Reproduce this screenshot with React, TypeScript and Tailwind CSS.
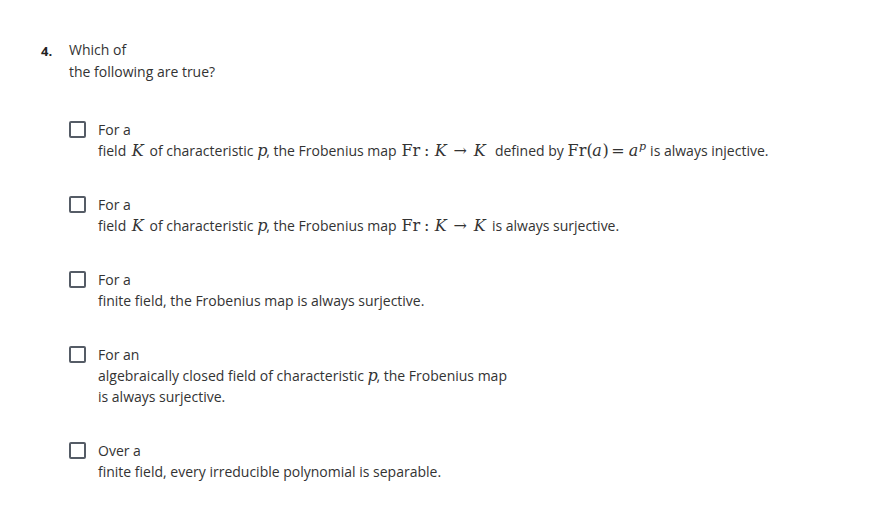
import React from "react";

const serif = '"DejaVu Serif", "Liberation Serif", serif';

const A = ({
  children,
  w,
  i = false,
  sup = false,
}: {
  children: React.ReactNode;
  w: string;
  i?: boolean;
  sup?: boolean;
}) => (
  <span
    className={`inline-block text-center leading-none ${w} ${i ? "italic" : ""} ${
      sup ? "text-[11px] align-[6px]" : "text-[16px]"
    }`}
    style={{ fontFamily: serif }}
  >
    {children}
  </span>
);

const FrMap = () => (
  <>
    <A w="w-[21px]">Fr</A>
    <A w="w-[11px]">:</A>
    <A w="w-[17px]" i>
      K
    </A>
    <A w="w-[22px]">→</A>
    <A w="w-[17px]" i>
      K
    </A>
  </>
);

const options: { first: string; rest: React.ReactNode }[] = [
  {
    first: "For a",
    rest: (
      <>
        field <A w="w-[16px]" i>K</A> of characteristic <A w="w-[9px]" i>p</A>, the Frobenius map{" "}
        <FrMap />
        <span className="inline-block w-[3px]" /> defined by <A w="w-[19px]">Fr</A>
        <A w="w-[5px]">(</A>
        <A w="w-[11px]" i>
          a
        </A>
        <A w="w-[5px]">)</A>
        <A w="w-[21px]">=</A>
        <A w="w-[10px]" i>
          a
        </A>
        <A w="w-[8px]" i sup>
          p
        </A>{" "}
        is always injective.
      </>
    ),
  },
  {
    first: "For a",
    rest: (
      <>
        field <A w="w-[16px]" i>K</A> of characteristic <A w="w-[9px]" i>p</A>, the Frobenius map{" "}
        <FrMap /> is always surjective.
      </>
    ),
  },
  { first: "For a", rest: <>finite field, the Frobenius map is always surjective.</> },
  {
    first: "For an",
    rest: (
      <>
        algebraically closed field of characteristic <A w="w-[9px]" i>p</A>, the Frobenius map
        <br />
        is always surjective.
      </>
    ),
  },
  { first: "Over a", rest: <>finite field, every irreducible polynomial is separable.</> },
];

export default function App() {
  return (
    <div
      className="w-[874px] h-[514px] bg-white text-[#333333] text-[14px] leading-[22px]"
      style={{ fontFamily: '"Open Sans", sans-serif' }}
    >
      <div className="flex pt-[39px] pl-[41px]">
        <div className="w-[28px] pt-[1px] font-bold text-[13px] text-[#222]">4.</div>
        <div>
          <div>Which of</div>
          <div>the following are true?</div>
          <div className="mt-[36px] flex flex-col gap-[33px] leading-[21px]">
            {options.map((o, idx) => (
              <div key={idx} className="flex">
                <div className="w-[29px] pt-[2px]">
                  <div className="w-[17px] h-[17px] border-2 border-[#555c66] rounded-[2px]" />
                </div>
                <div>
                  <div>{o.first}</div>
                  <div>{o.rest}</div>
                </div>
              </div>
            ))}
          </div>
        </div>
      </div>
    </div>
  );
}
